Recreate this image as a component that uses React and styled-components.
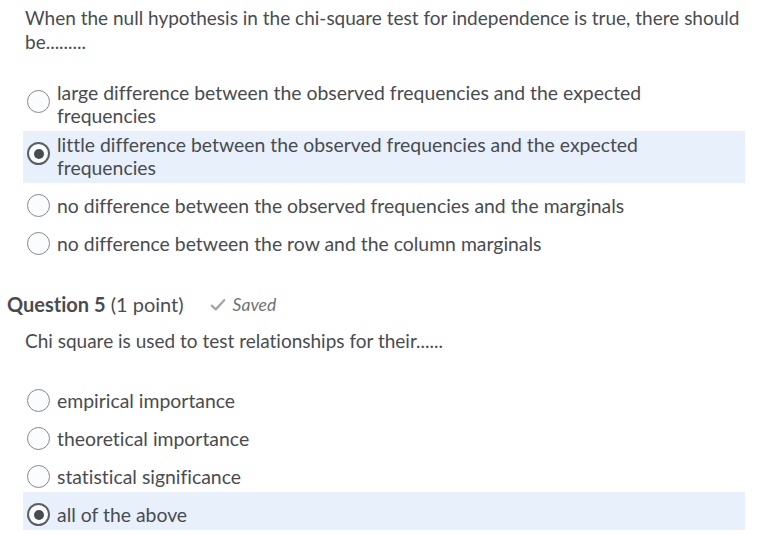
import React from "react";
import styled, { createGlobalStyle } from "styled-components";

const GlobalStyle = createGlobalStyle`
  html, body {
    margin: 0;
    padding: 0;
    background: #ffffff;
  }
  body {
    font-family: Lato, "Open Sans", sans-serif;
    color: #494c4e;
    font-variant-ligatures: none;
  }
`;

const questions = [
  {
    id: 4,
    text: "When the null hypothesis in the chi-square test for independence is true, there should be.........",
    selected: 1,
    options: [
      "large difference between the observed frequencies and the expected frequencies",
      "little difference between the observed frequencies and the expected frequencies",
      "no difference between the observed frequencies and the marginals",
      "no difference between the row and the column marginals",
    ],
  },
  {
    id: 5,
    header: true,
    text: "Chi square is used to test relationships for their......",
    selected: 3,
    options: [
      "empirical importance",
      "theoretical importance",
      "statistical significance",
      "all of the above",
    ],
  },
];

export default function App() {
  return (
    <>
      <GlobalStyle />
      <Page>
        {questions.map((q) => (
          <Question key={q.id}>
            {q.header && (
              <Header>
                <HeaderTitle>
                  <strong>Question {q.id}</strong> (1 point)
                </HeaderTitle>
                <SavedTag>
                  <svg width="16" height="14" viewBox="0 0 16 14">
                    <path
                      d="M1.8 7.6 L5.8 11.4 L14.2 2.2"
                      fill="none"
                      stroke="#a4a7a9"
                      strokeWidth="2.3"
                      strokeLinecap="round"
                      strokeLinejoin="round"
                    />
                  </svg>
                  <span>Saved</span>
                </SavedTag>
              </Header>
            )}
            <Body $compact={q.header}>
              <QuestionText>{q.text}</QuestionText>
              <OptionList>
                {q.options.map((opt, i) => (
                  <Option key={opt} $selected={i === q.selected}>
                    <Radio $selected={i === q.selected} />
                    <OptionText>{opt}</OptionText>
                  </Option>
                ))}
              </OptionList>
            </Body>
          </Question>
        ))}
      </Page>
    </>
  );
}

const Page = styled.div`
  display: flex;
  flex-direction: column;
  gap: 33px;
  padding: 6px 19px 0 7px;
`;

const Question = styled.section`
  display: flex;
  flex-direction: column;
`;

const Header = styled.div`
  display: flex;
  align-items: center;
  gap: 26px;
  height: 24px;
`;

const HeaderTitle = styled.h2`
  margin: 0;
  font-size: 20px;
  font-weight: 400;
  line-height: 24px;
  strong {
    font-weight: 700;
  }
`;

const SavedTag = styled.span`
  display: flex;
  align-items: center;
  gap: 7px;
  font-size: 17.5px;
  font-style: italic;
  color: #6e7376;
  svg {
    margin-top: 1px;
  }
`;

const Body = styled.div`
  display: flex;
  flex-direction: column;
  gap: 25px;
  padding-left: 18px;
  margin-top: ${(p) => (p.$compact ? "13px" : "0")};
`;

const QuestionText = styled.p`
  margin: 0;
  font-size: 19px;
  line-height: 24px;
`;

const OptionList = styled.div`
  display: flex;
  flex-direction: column;
  margin-left: -2px;
`;

const Option = styled.label`
  display: flex;
  align-items: flex-end;
  gap: 7px;
  box-sizing: border-box;
  min-height: 38px;
  padding: 2px 20px 4px 4px;
  background: ${(p) => (p.$selected ? "#e7f0fb" : "transparent")};
`;

const Radio = styled.span`
  position: relative;
  flex: 0 0 auto;
  align-self: flex-start;
  margin-top: 9px;
  box-sizing: border-box;
  width: 23px;
  height: 23px;
  border-radius: 50%;
  background: #fbfcfd;
  border: ${(p) => (p.$selected ? "2px solid #5b5f62" : "1px solid #85898c")};
  &::after {
    content: "";
    display: ${(p) => (p.$selected ? "block" : "none")};
    position: absolute;
    left: 50%;
    top: 50%;
    width: 10px;
    height: 10px;
    margin: -5px 0 0 -5px;
    border-radius: 50%;
    background: #494c4e;
  }
`;

const OptionText = styled.span`
  font-size: 19.4px;
  line-height: 23px;
`;
